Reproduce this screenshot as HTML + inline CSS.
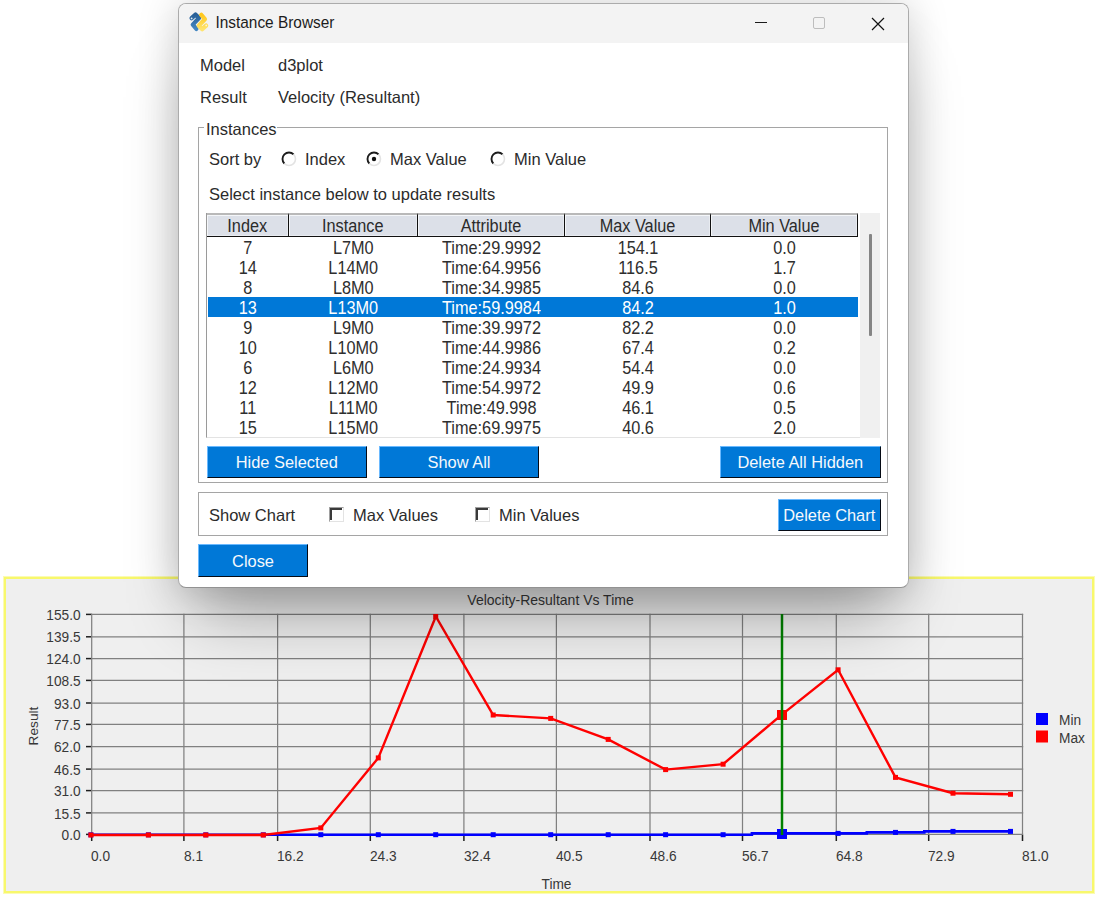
<!DOCTYPE html>
<html><head><meta charset="utf-8">
<style>
html,body{margin:0;padding:0;}
body{width:1099px;height:899px;overflow:hidden;position:relative;background:#ffffff;font-family:"Liberation Sans",sans-serif;}
.a{position:absolute;}
#chart{position:absolute;left:4px;top:577px;width:1086px;height:312px;border:2px solid #f8f86c;box-shadow:0 0 0 1px rgba(248,248,108,0.5);background:#efefef;}
svg#cs{position:absolute;left:0;top:0;}
.g{stroke:#808080;stroke-width:1.25;}
.tk{stroke:#1e1e1e;stroke-width:1.5;}
.lb{font-family:"Liberation Sans",sans-serif;font-size:13.7px;fill:#383838;}
#win{position:absolute;left:178px;top:3px;width:729px;height:583px;border:1px solid #ababab;border-radius:8px;background:#fff;overflow:hidden;
  box-shadow:0 44px 64px -18px rgba(0,0,0,0.32), 0 0 40px rgba(0,0,0,0.18);border-bottom-color:#929292;}
#tb{position:absolute;left:0;top:0;width:729px;height:39px;background:#f3f3f3;}
.t{position:absolute;white-space:nowrap;font-size:16.5px;line-height:16px;color:#2b2b2b;}
.gb{position:absolute;border:1px solid #a5a5a5;}
.th{position:absolute;top:213px;height:23px;line-height:23px;background:#dce0e8;text-align:center;font-size:16.3px;color:#2b2b2b;
   border-top:2px solid #b9b9b9;border-right:1.5px solid #111;box-sizing:border-box;box-shadow:inset 1px 1px 0 #f4f6f9, inset -1px -1px 0 #e8ebf0;}
.td{position:absolute;height:20px;line-height:20px;text-align:center;font-size:16.3px;color:#2e2e2e;white-space:nowrap;transform:scaleY(1.13);}
.td.w{color:#fff;}
.sel{position:absolute;left:208px;width:650px;height:20px;background:#0078d7;}
.btn{position:absolute;background:#0078d7;color:#f6f9fc;font-size:16.4px;text-align:center;box-sizing:border-box;
  border-top:1px solid #6ab9ff;border-left:1px solid #6ab9ff;border-right:1.5px solid #050a14;border-bottom:1.5px solid #050a14;white-space:nowrap;}
</style></head><body>
<div id="chart"></div>
<svg id="cs" width="1099" height="899" viewBox="0 0 1099 899">
<line x1="91" y1="614.4" x2="1023.2" y2="614.4" class="g"/>
<line x1="86" y1="614.4" x2="91.5" y2="614.4" class="tk"/>
<line x1="91" y1="636.8" x2="1023.2" y2="636.8" class="g"/>
<line x1="86" y1="636.8" x2="91.5" y2="636.8" class="tk"/>
<line x1="91" y1="658.6" x2="1023.2" y2="658.6" class="g"/>
<line x1="86" y1="658.6" x2="91.5" y2="658.6" class="tk"/>
<line x1="91" y1="680.4" x2="1023.2" y2="680.4" class="g"/>
<line x1="86" y1="680.4" x2="91.5" y2="680.4" class="tk"/>
<line x1="91" y1="703.0" x2="1023.2" y2="703.0" class="g"/>
<line x1="86" y1="703.0" x2="91.5" y2="703.0" class="tk"/>
<line x1="91" y1="724.4" x2="1023.2" y2="724.4" class="g"/>
<line x1="86" y1="724.4" x2="91.5" y2="724.4" class="tk"/>
<line x1="91" y1="746.6" x2="1023.2" y2="746.6" class="g"/>
<line x1="86" y1="746.6" x2="91.5" y2="746.6" class="tk"/>
<line x1="91" y1="769.1" x2="1023.2" y2="769.1" class="g"/>
<line x1="86" y1="769.1" x2="91.5" y2="769.1" class="tk"/>
<line x1="91" y1="790.6" x2="1023.2" y2="790.6" class="g"/>
<line x1="86" y1="790.6" x2="91.5" y2="790.6" class="tk"/>
<line x1="91" y1="812.9" x2="1023.2" y2="812.9" class="g"/>
<line x1="86" y1="812.9" x2="91.5" y2="812.9" class="tk"/>
<line x1="91" y1="834.4" x2="1023.2" y2="834.4" class="g"/>
<line x1="86" y1="834.4" x2="91.5" y2="834.4" class="tk"/>
<line x1="91.7" y1="613.8" x2="91.7" y2="835" class="g"/>
<line x1="91.7" y1="835" x2="91.7" y2="841" class="tk"/>
<line x1="183.9" y1="613.8" x2="183.9" y2="835" class="g"/>
<line x1="183.9" y1="835" x2="183.9" y2="841" class="tk"/>
<line x1="277.6" y1="613.8" x2="277.6" y2="835" class="g"/>
<line x1="277.6" y1="835" x2="277.6" y2="841" class="tk"/>
<line x1="370.3" y1="613.8" x2="370.3" y2="835" class="g"/>
<line x1="370.3" y1="835" x2="370.3" y2="841" class="tk"/>
<line x1="463.9" y1="613.8" x2="463.9" y2="835" class="g"/>
<line x1="463.9" y1="835" x2="463.9" y2="841" class="tk"/>
<line x1="556.4" y1="613.8" x2="556.4" y2="835" class="g"/>
<line x1="556.4" y1="835" x2="556.4" y2="841" class="tk"/>
<line x1="650.0" y1="613.8" x2="650.0" y2="835" class="g"/>
<line x1="650.0" y1="835" x2="650.0" y2="841" class="tk"/>
<line x1="742.5" y1="613.8" x2="742.5" y2="835" class="g"/>
<line x1="742.5" y1="835" x2="742.5" y2="841" class="tk"/>
<line x1="836.3" y1="613.8" x2="836.3" y2="835" class="g"/>
<line x1="836.3" y1="835" x2="836.3" y2="841" class="tk"/>
<line x1="928.7" y1="613.8" x2="928.7" y2="835" class="g"/>
<line x1="928.7" y1="835" x2="928.7" y2="841" class="tk"/>
<line x1="1022.5" y1="613.8" x2="1022.5" y2="835" class="g"/>
<line x1="1022.5" y1="835" x2="1022.5" y2="841" class="tk"/>
<text transform="translate(80.6 620.0) scale(1 1.07)" text-anchor="end" class="lb">155.0</text>
<text transform="translate(80.6 642.4) scale(1 1.07)" text-anchor="end" class="lb">139.5</text>
<text transform="translate(80.6 664.2) scale(1 1.07)" text-anchor="end" class="lb">124.0</text>
<text transform="translate(80.6 686.0) scale(1 1.07)" text-anchor="end" class="lb">108.5</text>
<text transform="translate(80.6 708.6) scale(1 1.07)" text-anchor="end" class="lb">93.0</text>
<text transform="translate(80.6 730.0) scale(1 1.07)" text-anchor="end" class="lb">77.5</text>
<text transform="translate(80.6 752.2) scale(1 1.07)" text-anchor="end" class="lb">62.0</text>
<text transform="translate(80.6 774.7) scale(1 1.07)" text-anchor="end" class="lb">46.5</text>
<text transform="translate(80.6 796.2) scale(1 1.07)" text-anchor="end" class="lb">31.0</text>
<text transform="translate(80.6 818.5) scale(1 1.07)" text-anchor="end" class="lb">15.5</text>
<text transform="translate(80.6 840.0) scale(1 1.07)" text-anchor="end" class="lb">0.0</text>
<text transform="translate(91 861) scale(1 1.07)" class="lb">0.0</text>
<text transform="translate(184 861) scale(1 1.07)" class="lb">8.1</text>
<text transform="translate(277 861) scale(1 1.07)" class="lb">16.2</text>
<text transform="translate(370 861) scale(1 1.07)" class="lb">24.3</text>
<text transform="translate(464 861) scale(1 1.07)" class="lb">32.4</text>
<text transform="translate(556 861) scale(1 1.07)" class="lb">40.5</text>
<text transform="translate(650 861) scale(1 1.07)" class="lb">48.6</text>
<text transform="translate(742 861) scale(1 1.07)" class="lb">56.7</text>
<text transform="translate(836 861) scale(1 1.07)" class="lb">64.8</text>
<text transform="translate(928 861) scale(1 1.07)" class="lb">72.9</text>
<text transform="translate(1022 861) scale(1 1.07)" class="lb">81.0</text>
<text transform="translate(550.5 605.3) scale(1 1.07)" text-anchor="middle" class="lb" style="font-size:14px">Velocity-Resultant Vs Time</text>
<text transform="translate(556.5 888.8) scale(1 1.07)" text-anchor="middle" class="lb">Time</text>
<text transform="translate(38,726) rotate(-90)" text-anchor="middle" class="lb">Result</text>
<rect x="1036" y="713" width="12" height="12" fill="#0000ff"/>
<rect x="1036" y="730.5" width="12" height="12" fill="#ff0000"/>
<text transform="translate(1059 725) scale(1 1.07)" class="lb">Min</text>
<text transform="translate(1059 742.6) scale(1 1.07)" class="lb">Max</text>
<path d="M90.9,834.8 H292.1 V834.7 H751.9 V833.4 H866.8 V832.4 H924.3 V831.4 H1010.5" fill="none" stroke="#0000ff" stroke-width="2.6"/>
<rect x="88.4" y="832.3" width="5" height="5" fill="#0000ff"/>
<rect x="145.9" y="832.3" width="5" height="5" fill="#0000ff"/>
<rect x="203.3" y="832.3" width="5" height="5" fill="#0000ff"/>
<rect x="260.8" y="832.3" width="5" height="5" fill="#0000ff"/>
<rect x="318.3" y="832.2" width="5" height="5" fill="#0000ff"/>
<rect x="375.8" y="832.2" width="5" height="5" fill="#0000ff"/>
<rect x="433.2" y="832.2" width="5" height="5" fill="#0000ff"/>
<rect x="490.7" y="832.2" width="5" height="5" fill="#0000ff"/>
<rect x="548.2" y="832.2" width="5" height="5" fill="#0000ff"/>
<rect x="605.7" y="832.2" width="5" height="5" fill="#0000ff"/>
<rect x="663.1" y="832.2" width="5" height="5" fill="#0000ff"/>
<rect x="720.6" y="832.2" width="5" height="5" fill="#0000ff"/>
<rect x="778.1" y="830.9" width="5" height="5" fill="#0000ff"/>
<rect x="835.6" y="830.9" width="5" height="5" fill="#0000ff"/>
<rect x="893.0" y="829.9" width="5" height="5" fill="#0000ff"/>
<rect x="950.5" y="828.9" width="5" height="5" fill="#0000ff"/>
<rect x="1008.0" y="828.9" width="5" height="5" fill="#0000ff"/>
<polyline points="90.9,835.0 148.4,835.0 205.8,835.0 263.3,835.0 320.8,827.9 378.3,757.9 435.8,616.5 493.2,715.0 550.7,718.4 608.2,739.4 665.6,769.6 723.1,764.2 780.6,715.6 838.1,669.8 895.5,777.4 953.0,793.2 1010.5,794.3" fill="none" stroke="#ff0000" stroke-width="2.4"/>
<rect x="88.4" y="832.5" width="5" height="5" fill="#ff0000"/>
<rect x="145.9" y="832.5" width="5" height="5" fill="#ff0000"/>
<rect x="203.3" y="832.5" width="5" height="5" fill="#ff0000"/>
<rect x="260.8" y="832.5" width="5" height="5" fill="#ff0000"/>
<rect x="318.3" y="825.4" width="5" height="5" fill="#ff0000"/>
<rect x="375.8" y="755.4" width="5" height="5" fill="#ff0000"/>
<rect x="433.2" y="614.0" width="5" height="5" fill="#ff0000"/>
<rect x="490.7" y="712.5" width="5" height="5" fill="#ff0000"/>
<rect x="548.2" y="715.9" width="5" height="5" fill="#ff0000"/>
<rect x="605.7" y="736.9" width="5" height="5" fill="#ff0000"/>
<rect x="663.1" y="767.1" width="5" height="5" fill="#ff0000"/>
<rect x="720.6" y="761.7" width="5" height="5" fill="#ff0000"/>
<rect x="778.1" y="713.1" width="5" height="5" fill="#ff0000"/>
<rect x="835.6" y="667.3" width="5" height="5" fill="#ff0000"/>
<rect x="893.0" y="774.9" width="5" height="5" fill="#ff0000"/>
<rect x="950.5" y="790.7" width="5" height="5" fill="#ff0000"/>
<rect x="1008.0" y="791.8" width="5" height="5" fill="#ff0000"/>
<rect x="777" y="710" width="10" height="10" fill="#ff0000"/>
<rect x="777" y="829" width="10" height="10" fill="#0000ff"/>
<line x1="782" y1="614" x2="782" y2="835" stroke="#008000" stroke-width="2.5"/>
</svg>
<div id="win">
 <div id="tb"></div>
</div>
<!-- window contents in page coordinates -->
<div class="a" style="left:0;top:0;width:1099px;height:899px;">
 <svg class="a" style="left:186px;top:10px" width="26" height="24" viewBox="0 0 26 24">
  <defs>
   <linearGradient id="pb" x1="0" y1="0" x2="0" y2="1"><stop offset="0" stop-color="#2a6097"/><stop offset="1" stop-color="#4386c0"/></linearGradient>
   <linearGradient id="py" x1="0" y1="0" x2="0" y2="1"><stop offset="0" stop-color="#ffc81e"/><stop offset="1" stop-color="#ffe46e"/></linearGradient>
  </defs>
  <polyline points="5.6,8.2 9.5,4.6 13,8 6.8,14.6 10.4,18.9" fill="none" stroke="url(#pb)" stroke-width="4.3" stroke-linejoin="round" stroke-linecap="round"/>
  <polyline points="20.1,15.6 16.2,19.2 12.7,15.8 18.9,9.2 15.3,4.9" fill="none" stroke="url(#py)" stroke-width="4.3" stroke-linejoin="round" stroke-linecap="round"/>
  <circle cx="5.6" cy="8.4" r="0.9" fill="#e8eef5"/>
  <circle cx="20.2" cy="15.4" r="0.9" fill="#fff6d0"/>
 </svg>
 <div class="t" style="left:215.5px;top:15px;font-size:15.4px;line-height:15.4px;transform:scaleY(1.1);transform-origin:0 13px;color:#1c1c1c;">Instance Browser</div>
 <div class="a" style="left:755px;top:22px;width:12px;height:1px;background:#1a1a1a;"></div>
 <div class="a" style="left:813px;top:17px;width:10px;height:10px;border:1px solid #bdbdbd;border-radius:2px;"></div>
 <svg class="a" style="left:871px;top:16.5px" width="14" height="14" viewBox="0 0 14 14"><path d="M1 1 L13 13 M13 1 L1 13" stroke="#111" stroke-width="1.2"/></svg>

 <div class="t" style="left:200px;top:57px;">Model</div>
 <div class="t" style="left:278px;top:57px;">d3plot</div>
 <div class="t" style="left:200px;top:88.5px;">Result</div>
 <div class="t" style="left:278px;top:88.5px;">Velocity (Resultant)</div>

 <div class="gb" style="left:198px;top:127px;width:688px;height:354px;"></div>
 <div class="a" style="left:204px;top:120px;width:73px;height:14px;background:#fff;"></div>
 <div class="t" style="left:206px;top:120.5px;">Instances</div>

 <div class="t" style="left:209px;top:151px;">Sort by</div>
 <div class="t" style="left:305px;top:151px;">Index</div>
 <div class="t" style="left:390px;top:151px;">Max Value</div>
 <div class="t" style="left:514px;top:151px;">Min Value</div>
 <svg class="a" style="left:280.5px;top:151px" width="16" height="16" viewBox="0 0 16 16"><path d="M12.6 3.4 A6.5 6.5 0 0 0 3.4 12.6" fill="none" stroke="#1c1c1c" stroke-width="1.9"/><path d="M12.6 3.4 A6.5 6.5 0 0 1 3.4 12.6" fill="none" stroke="#e3e3e3" stroke-width="1.6"/></svg><svg class="a" style="left:366px;top:151px" width="16" height="16" viewBox="0 0 16 16"><path d="M12.6 3.4 A6.5 6.5 0 0 0 3.4 12.6" fill="none" stroke="#1c1c1c" stroke-width="1.9"/><path d="M12.6 3.4 A6.5 6.5 0 0 1 3.4 12.6" fill="none" stroke="#e3e3e3" stroke-width="1.6"/><circle cx="8" cy="8" r="2.2" fill="#111"/></svg><svg class="a" style="left:490px;top:151px" width="16" height="16" viewBox="0 0 16 16"><path d="M12.6 3.4 A6.5 6.5 0 0 0 3.4 12.6" fill="none" stroke="#1c1c1c" stroke-width="1.9"/><path d="M12.6 3.4 A6.5 6.5 0 0 1 3.4 12.6" fill="none" stroke="#e3e3e3" stroke-width="1.6"/></svg>
 <div class="t" style="left:209px;top:186px;">Select instance below to update results</div>

 <div class="a" style="left:206px;top:213px;width:674px;height:225px;background:#fff;border-left:1px solid #9a9a9a;border-bottom:1px solid #e3e3e3;box-sizing:border-box;"></div>
 <div class="a" style="left:860px;top:213px;width:20px;height:225px;background:#f0f0f0;"></div>
 <div class="a" style="left:869px;top:234px;width:3px;height:102px;background:#858585;border-radius:1px;"></div>
 <div class="th" style="left:207px;width:81.5px"><span style="display:inline-block;transform:scaleY(1.1);transform-origin:50% 16px">Index</span></div>
<div class="th" style="left:288.5px;width:129.5px"><span style="display:inline-block;transform:scaleY(1.1);transform-origin:50% 16px">Instance</span></div>
<div class="th" style="left:418px;width:147px"><span style="display:inline-block;transform:scaleY(1.1);transform-origin:50% 16px">Attribute</span></div>
<div class="th" style="left:565px;width:146px"><span style="display:inline-block;transform:scaleY(1.1);transform-origin:50% 16px">Max Value</span></div>
<div class="th" style="left:711px;width:147px"><span style="display:inline-block;transform:scaleY(1.1);transform-origin:50% 16px">Min Value</span></div>
<div class="td" style="left:207px;width:81.5px;top:237px">7</div>
<div class="td" style="left:288.5px;width:129.5px;top:237px">L7M0</div>
<div class="td" style="left:418px;width:147px;top:237px">Time:29.9992</div>
<div class="td" style="left:565px;width:146px;top:237px">154.1</div>
<div class="td" style="left:711px;width:147px;top:237px">0.0</div>
<div class="td" style="left:207px;width:81.5px;top:257px">14</div>
<div class="td" style="left:288.5px;width:129.5px;top:257px">L14M0</div>
<div class="td" style="left:418px;width:147px;top:257px">Time:64.9956</div>
<div class="td" style="left:565px;width:146px;top:257px">116.5</div>
<div class="td" style="left:711px;width:147px;top:257px">1.7</div>
<div class="td" style="left:207px;width:81.5px;top:277px">8</div>
<div class="td" style="left:288.5px;width:129.5px;top:277px">L8M0</div>
<div class="td" style="left:418px;width:147px;top:277px">Time:34.9985</div>
<div class="td" style="left:565px;width:146px;top:277px">84.6</div>
<div class="td" style="left:711px;width:147px;top:277px">0.0</div>
<div class="sel" style="top:297px"></div>
<div class="td w" style="left:207px;width:81.5px;top:297px">13</div>
<div class="td w" style="left:288.5px;width:129.5px;top:297px">L13M0</div>
<div class="td w" style="left:418px;width:147px;top:297px">Time:59.9984</div>
<div class="td w" style="left:565px;width:146px;top:297px">84.2</div>
<div class="td w" style="left:711px;width:147px;top:297px">1.0</div>
<div class="td" style="left:207px;width:81.5px;top:317px">9</div>
<div class="td" style="left:288.5px;width:129.5px;top:317px">L9M0</div>
<div class="td" style="left:418px;width:147px;top:317px">Time:39.9972</div>
<div class="td" style="left:565px;width:146px;top:317px">82.2</div>
<div class="td" style="left:711px;width:147px;top:317px">0.0</div>
<div class="td" style="left:207px;width:81.5px;top:337px">10</div>
<div class="td" style="left:288.5px;width:129.5px;top:337px">L10M0</div>
<div class="td" style="left:418px;width:147px;top:337px">Time:44.9986</div>
<div class="td" style="left:565px;width:146px;top:337px">67.4</div>
<div class="td" style="left:711px;width:147px;top:337px">0.2</div>
<div class="td" style="left:207px;width:81.5px;top:357px">6</div>
<div class="td" style="left:288.5px;width:129.5px;top:357px">L6M0</div>
<div class="td" style="left:418px;width:147px;top:357px">Time:24.9934</div>
<div class="td" style="left:565px;width:146px;top:357px">54.4</div>
<div class="td" style="left:711px;width:147px;top:357px">0.0</div>
<div class="td" style="left:207px;width:81.5px;top:377px">12</div>
<div class="td" style="left:288.5px;width:129.5px;top:377px">L12M0</div>
<div class="td" style="left:418px;width:147px;top:377px">Time:54.9972</div>
<div class="td" style="left:565px;width:146px;top:377px">49.9</div>
<div class="td" style="left:711px;width:147px;top:377px">0.6</div>
<div class="td" style="left:207px;width:81.5px;top:397px">11</div>
<div class="td" style="left:288.5px;width:129.5px;top:397px">L11M0</div>
<div class="td" style="left:418px;width:147px;top:397px">Time:49.998</div>
<div class="td" style="left:565px;width:146px;top:397px">46.1</div>
<div class="td" style="left:711px;width:147px;top:397px">0.5</div>
<div class="td" style="left:207px;width:81.5px;top:417px">15</div>
<div class="td" style="left:288.5px;width:129.5px;top:417px">L15M0</div>
<div class="td" style="left:418px;width:147px;top:417px">Time:69.9975</div>
<div class="td" style="left:565px;width:146px;top:417px">40.6</div>
<div class="td" style="left:711px;width:147px;top:417px">2.0</div>
 <div class="a" style="left:207px;top:235.5px;width:651px;height:1.5px;background:#111;"></div>

 <div class="btn" style="left:207px;top:445.5px;width:159.5px;height:32.5px;line-height:31px;">Hide Selected</div>
 <div class="btn" style="left:379px;top:445.5px;width:160px;height:32.5px;line-height:31px;">Show All</div>
 <div class="btn" style="left:720px;top:445.5px;width:160.5px;height:32.5px;line-height:31px;">Delete All Hidden</div>

 <div class="gb" style="left:198px;top:492px;width:688px;height:42px;"></div>
 <div class="t" style="left:209px;top:506.5px;">Show Chart</div>
 <div class="a" style="left:329px;top:507px;width:15px;height:15px;box-sizing:border-box;border-top:1px solid #a0a0a0;border-left:1px solid #a0a0a0;border-right:1px solid #e3e3e3;border-bottom:1px solid #e3e3e3;"><div class="a" style="left:0;top:0;width:12px;height:12px;border-top:2px solid #3a3a3a;border-left:2px solid #3a3a3a;box-sizing:border-box;"></div></div><div class="a" style="left:475px;top:507px;width:15px;height:15px;box-sizing:border-box;border-top:1px solid #a0a0a0;border-left:1px solid #a0a0a0;border-right:1px solid #e3e3e3;border-bottom:1px solid #e3e3e3;"><div class="a" style="left:0;top:0;width:12px;height:12px;border-top:2px solid #3a3a3a;border-left:2px solid #3a3a3a;box-sizing:border-box;"></div></div>
 <div class="t" style="left:353px;top:506.5px;">Max Values</div>
 <div class="t" style="left:499px;top:506.5px;">Min Values</div>
 <div class="btn" style="left:778px;top:498.5px;width:102.5px;height:32px;line-height:30px;">Delete Chart</div>

 <div class="btn" style="left:198px;top:544px;width:110px;height:33px;line-height:32px;">Close</div>
</div>
</body></html>
